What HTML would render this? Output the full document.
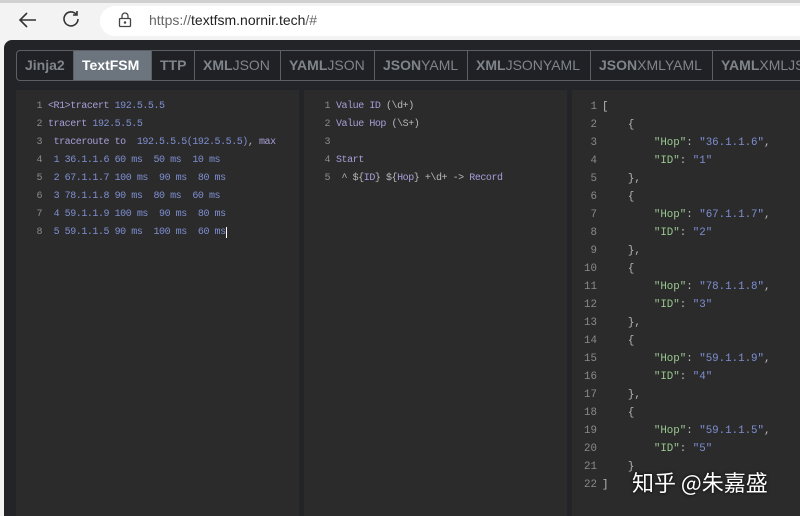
<!DOCTYPE html>
<html><head><meta charset="utf-8"><style>
*{margin:0;padding:0;box-sizing:border-box}
html,body{width:800px;height:516px;overflow:hidden}
body{background:#f3f3f3;font-family:"Liberation Sans",sans-serif;position:relative}
.top{position:absolute;left:0;top:0;width:800px;height:3px;background:#d0d0d0}
.addr{position:absolute;left:100px;top:6px;width:720px;height:30px;border-radius:15px;background:#fff}
.url{position:absolute;left:149px;top:12px;font-size:14px;color:#666}
.url b{font-weight:normal;color:#222}
.app{position:absolute;left:4px;top:40px;width:810px;height:490px;background:#222428;border-radius:8px}
.tabs{position:absolute;left:16px;top:50px;height:31px;display:flex;border:1px solid #5c6066;border-radius:4px;background:#1f2125;overflow:hidden;width:800px}
.tab{flex-shrink:0;height:29px;line-height:29px;font-size:14px;color:#80858b;padding:0 8px;border-right:1px solid #5c6066;white-space:nowrap;overflow:hidden}
.tab b{font-weight:bold}
.tab.act{background:#6c757d;color:#fff;font-weight:bold}
.panel{position:absolute;top:90px;height:430px;background:#2b2b2b}
.code{position:absolute;font-family:"Liberation Mono","Noto Sans CJK SC",monospace;font-size:10px;letter-spacing:-0.45px;line-height:18px;white-space:pre;color:#b8b8b8}
.n{color:#8a8a8a;display:inline-block;width:14px;text-align:right;margin-right:6px}
.r{font-size:10.8px;letter-spacing:0}
.r .n{width:19px;margin-right:5px}
.p{color:#a89ed8}.bl{color:#7f8fd2}.g{color:#98c88f}
.wm{position:absolute;left:632px;top:466px;font-family:"Noto Sans CJK SC",sans-serif;font-size:22px;color:#fff;text-shadow:0 0 3px #000}
</style></head><body>
<div class="top"></div>
<svg style="position:absolute;left:18px;top:10px" width="20" height="20" viewBox="0 0 20 20" fill="none" stroke="#333" stroke-width="1.6"><path d="M18 10H3M9 3L2 10l7 7"/></svg>
<svg style="position:absolute;left:62px;top:10px" width="20" height="20" viewBox="0 0 20 20" fill="none" stroke="#333" stroke-width="1.6"><path d="M16 9a7 7 0 1 1-2-5M15 1v4h-4"/></svg>
<div class="addr"></div>
<svg style="position:absolute;left:118px;top:12px" width="14" height="16" viewBox="0 0 14 16" fill="none" stroke="#444" stroke-width="1.3"><rect x="1.5" y="6.5" width="11" height="8" rx="1"/><path d="M4 6.5V4a3 3 0 0 1 6 0v2.5"/><circle cx="7" cy="10.5" r=".6" fill="#444"/></svg>
<div class="url">https://<b>textfsm.nornir.tech</b>/#</div>
<div class="app"></div>
<div class="tabs">
<div class="tab" style="width:57px"><b>Jinja2</b></div>
<div class="tab act" style="width:78px">TextFSM</div>
<div class="tab" style="width:43px"><b>TTP</b></div>
<div class="tab" style="width:86px"><b>XML</b>JSON</div>
<div class="tab" style="width:94px"><b>YAML</b>JSON</div>
<div class="tab" style="width:93px"><b>JSON</b>YAML</div>
<div class="tab" style="width:123px"><b>XML</b>JSONYAML</div>
<div class="tab" style="width:122px"><b>JSON</b>XMLYAML</div>
<div class="tab" style="width:120px"><b>YAML</b>XMLJSON</div>
</div>
<div class="panel" style="left:16px;width:283px"></div>
<div class="panel" style="left:304px;width:263px"></div>
<div class="panel" style="left:572px;width:240px"></div>
<div class="code" style="left:28px;top:98px;width:268px;overflow:hidden"><span class="n">1</span><span class="p">&lt;R1&gt;tracert</span> <span class="bl">192.5.5.5</span>
<span class="n">2</span><span class="p">tracert</span> <span class="bl">192.5.5.5</span>
<span class="n">3</span> <span class="p">traceroute to</span>  <span class="bl">192.5.5.5(192.5.5.5)</span>, <span class="p">max</span>
<span class="n">4</span> <span class="bl">1 36.1.1.6 60 ms  50 ms  10 ms</span>
<span class="n">5</span> <span class="bl">2 67.1.1.7 100 ms  90 ms  80 ms</span>
<span class="n">6</span> <span class="bl">3 78.1.1.8 90 ms  80 ms  60 ms</span>
<span class="n">7</span> <span class="bl">4 59.1.1.9 100 ms  90 ms  80 ms</span>
<span class="n">8</span> <span class="bl">5 59.1.1.5 90 ms  100 ms  60 ms</span><span style="border-left:1px solid #fff"></span></div>
<div class="code" style="left:316px;top:98px"><span class="n">1</span><span class="p">Value</span> <span class="p">ID</span> (\d+)
<span class="n">2</span><span class="p">Value</span> <span class="p">Hop</span> (\S+)
<span class="n">3</span>
<span class="n">4</span><span class="p">Start</span>
<span class="n">5</span> ^ ${<span class="p">ID</span>} ${<span class="p">Hop</span>} +\d+ -&gt; <span class="p">Record</span></div>
<div class="code r" style="left:578px;top:98px"><span class="n">1</span>[
<span class="n">2</span>    {
<span class="n">3</span>        <span class="g">"Hop"</span>: <span class="bl">"36.1.1.6"</span>,
<span class="n">4</span>        <span class="g">"ID"</span>: <span class="bl">"1"</span>
<span class="n">5</span>    },
<span class="n">6</span>    {
<span class="n">7</span>        <span class="g">"Hop"</span>: <span class="bl">"67.1.1.7"</span>,
<span class="n">8</span>        <span class="g">"ID"</span>: <span class="bl">"2"</span>
<span class="n">9</span>    },
<span class="n">10</span>    {
<span class="n">11</span>        <span class="g">"Hop"</span>: <span class="bl">"78.1.1.8"</span>,
<span class="n">12</span>        <span class="g">"ID"</span>: <span class="bl">"3"</span>
<span class="n">13</span>    },
<span class="n">14</span>    {
<span class="n">15</span>        <span class="g">"Hop"</span>: <span class="bl">"59.1.1.9"</span>,
<span class="n">16</span>        <span class="g">"ID"</span>: <span class="bl">"4"</span>
<span class="n">17</span>    },
<span class="n">18</span>    {
<span class="n">19</span>        <span class="g">"Hop"</span>: <span class="bl">"59.1.1.5"</span>,
<span class="n">20</span>        <span class="g">"ID"</span>: <span class="bl">"5"</span>
<span class="n">21</span>    }
<span class="n">22</span>]</div>
<div class="wm">知乎 @朱嘉盛</div>
</body></html>
